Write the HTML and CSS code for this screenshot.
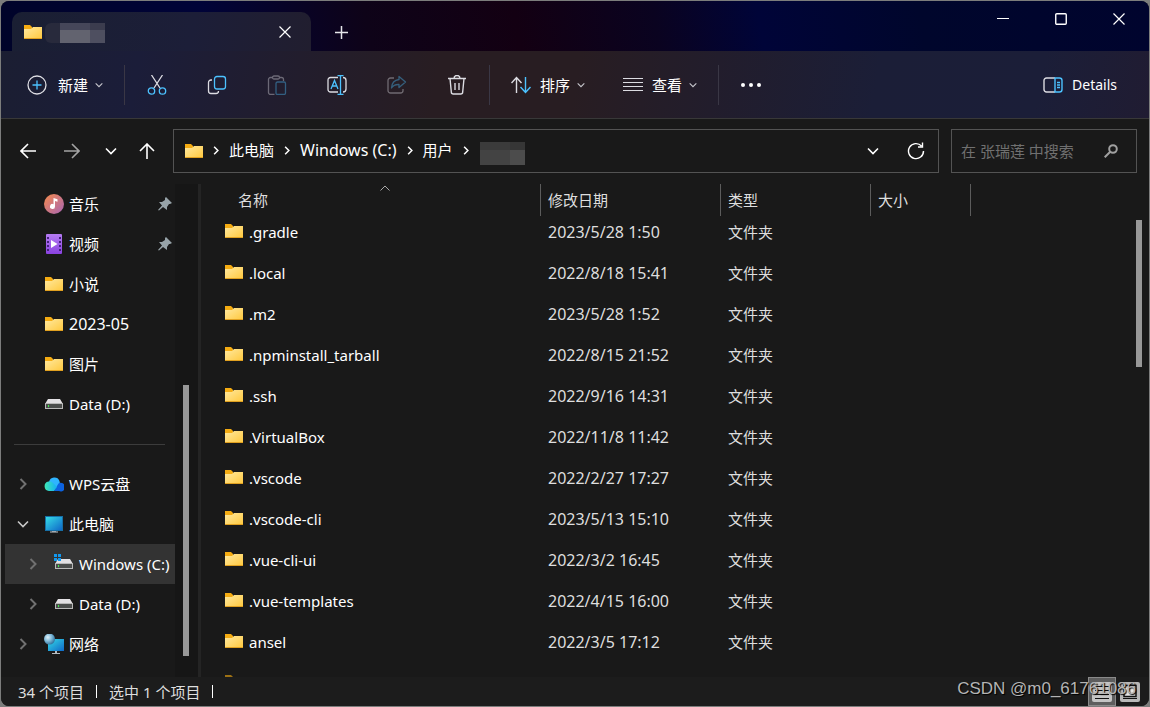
FILE: index.html
```html
<!DOCTYPE html>
<html lang="zh-CN">
  <head>
    <meta charset="UTF-8" />
    <meta name="viewport" content="width=device-width, initial-scale=1.0" />
    <title>文件资源管理器</title>
    <link rel="stylesheet" href="styles.css">
  </head>
  <body>
    <!-- shared icons -->
    <svg class="defs" aria-hidden="true">
      <defs>
        <linearGradient id="gFolder" x1="0" y1="0" x2="1" y2="1">
          <stop offset="0" stop-color="#ffe9a0" />
          <stop offset="1" stop-color="#ffc83d" />
        </linearGradient>
        <linearGradient id="gMusic" x1="0" y1="0" x2="1" y2="1">
          <stop offset="0" stop-color="#f58a4b" />
          <stop offset="1" stop-color="#a765b5" />
        </linearGradient>
        <linearGradient id="gVideo" x1="0" y1="0" x2="0" y2="1">
          <stop offset="0" stop-color="#b57cf2" />
          <stop offset="1" stop-color="#8a42e0" />
        </linearGradient>
        <linearGradient id="gScreen" x1="0" y1="0" x2="1" y2="1">
          <stop offset="0" stop-color="#35dbe6" />
          <stop offset="1" stop-color="#0f68c8" />
        </linearGradient>
        <linearGradient id="gCloud" x1="0" y1="0" x2="1" y2="0">
          <stop offset="0" stop-color="#3fe8b4" />
          <stop offset="1" stop-color="#14aef5" />
        </linearGradient>
        <radialGradient id="gGlobe" cx="0.35" cy="0.35" r="0.7">
          <stop offset="0" stop-color="#e2f2fa" />
          <stop offset="0.5" stop-color="#7fb9d8" />
          <stop offset="1" stop-color="#2f6f9a" />
        </radialGradient>
      </defs>
      <symbol id="folder" viewBox="0 0 18 14">
        <path d="M0 0h6l2 2v4H0z" fill="#f5ac12" />
        <path d="M0 4h7l2-2h9v12H0z" fill="url(#gFolder)" />
        <path d="M0 13h18v1H0z" fill="#e0a020" />
      </symbol>
      <symbol id="drive" viewBox="0 0 18 11">
        <path d="M3 0h12l3 5H0z" fill="#e3e1e4" />
        <path d="M0 4h18v6H0z" fill="#b8b8b8" />
        <path d="M1 5h16v4H1z" fill="#4b4d4c" />
        <path d="M3 6h1v2H3z" fill="#3df04a" />
      </symbol>
      <symbol id="pin" viewBox="0 0 14 14">
        <path d="M8 0l6 6-2 1-1 0-2 3v3L5 10l-4 3.500-1-.5L4 8.500 1 5h3l3-2V1z" fill="#97a3a9" />
      </symbol>
      <symbol id="right" viewBox="0 0 8 12">
        <path d="M1.500 1l5 5-5 5" fill="none" stroke="currentColor" stroke-width="2" />
      </symbol>
      <symbol id="down" viewBox="0 0 12 8">
        <path d="M1 1.500l5 5 5-5" fill="none" stroke="currentColor" stroke-width="1.600" />
      </symbol>
      <symbol id="close" viewBox="0 0 12 12">
        <path d="M.5.5l11 11M11.500.5l-11 11" stroke="currentColor" stroke-width="1.200" />
      </symbol>
    </svg>

    <div class="window">
      <header class="titlebar">
        <div class="tab">
          <svg class="folder"><use href="#folder" /></svg>
          <span class="mask tab-mask"><i></i><i></i><i></i><i></i></span>
          <button class="tab-close" aria-label="关闭标签页"><svg class="x"><use href="#close" /></svg></button>
        </div>
        <button class="tab-add" aria-label="新标签页">
          <svg width="13" height="13"><path d="M6.500 0v13M0 6.500h13" stroke="#e6e6ea" stroke-width="1.500" /></svg>
        </button>
        <div class="controls">
          <button aria-label="最小化"><svg width="12" height="12"><path d="M0 5.500h12" stroke="#fff" /></svg></button>
          <button aria-label="最大化"><svg width="12" height="12"><rect x=".75" y=".75" width="10.500" height="10.500" rx="1" fill="none" stroke="#fff" stroke-width="1.400" /></svg></button>
          <button aria-label="关闭"><svg class="x"><use href="#close" /></svg></button>
        </div>
      </header>

      <div class="toolbar">
        <button class="tool text new">
          <svg width="20" height="20" fill="none" stroke-width="1.300">
            <circle cx="10" cy="10" r="9" stroke="#dcdce2" />
            <path d="M10 5.500v9M5.500 10h9" stroke="#4cc2ff" />
          </svg>
          <span>新建</span>
          <svg class="caret"><use href="#down" /></svg>
        </button>
        <span class="sep"></span>
        <button class="tool" aria-label="剪切">
          <svg width="20" height="20" fill="none" stroke-width="1.300">
            <path d="M4.500 0L13 13M15.500 0L7 13" stroke="#dcdce2" />
            <circle cx="4.500" cy="16" r="3.200" stroke="#4cc2ff" />
            <circle cx="15.500" cy="16" r="3.200" stroke="#4cc2ff" />
          </svg>
        </button>
        <button class="tool" aria-label="复制">
          <svg width="20" height="20" fill="none" stroke-width="1.300">
            <path d="M5 5H4a2.500 2.500 0 0 0-2.500 2.500v8.500A2.500 2.500 0 0 0 4 18.500h5A2.500 2.500 0 0 0 11.500 16" stroke="#dcdce2" />
            <rect x="7.500" y="1.500" width="11" height="12.500" rx="2.500" stroke="#4cc2ff" />
          </svg>
        </button>
        <button class="tool" aria-label="粘贴" disabled>
          <svg width="20" height="20" fill="none" stroke-width="1.300">
            <path d="M7.500 19.500H3.500a2 2 0 0 1-2-2v-13a2 2 0 0 1 2-2H6M12 2.500h2.500a2 2 0 0 1 2 2V6" stroke="#dcdce2" />
            <rect x="5.500" y="1" width="7" height="3" rx="1.500" stroke="#dcdce2" />
            <rect x="9" y="7" width="9.500" height="12.500" rx="1.500" stroke="#4cc2ff" />
          </svg>
        </button>
        <button class="tool" aria-label="重命名">
          <svg width="20" height="20" fill="none" stroke-width="1.300">
            <path d="M11 2.500H3.500a2.500 2.500 0 0 0-2.500 2.500v9.500A2.500 2.500 0 0 0 3.500 17H11M16 2.500a3 3 0 0 1 3 3v8.500a3 3 0 0 1-3 3" stroke="#dcdce2" />
            <path d="M4 14L7.500 5.500 11 14M5.300 11h4.400M13.500 1v18M10.500.7h6M10.500 19.300h6" stroke="#4cc2ff" />
          </svg>
        </button>
        <button class="tool" aria-label="共享" disabled>
          <svg width="20" height="20" fill="none" stroke-width="1.300">
            <path d="M7 3H3.500a2.500 2.500 0 0 0-2.500 2.500v10A2.500 2.500 0 0 0 3.500 18h10A2.500 2.500 0 0 0 16 15.500V14" stroke="#dcdce2" />
            <path d="M12 1.500l6.500 5.500-6.500 5.500V9.500C8 9.300 6 10.500 4.500 13 4.800 8 7.500 5 12 4.500z" stroke="#4cc2ff" stroke-linejoin="round" />
          </svg>
        </button>
        <button class="tool" aria-label="删除">
          <svg width="20" height="20" fill="none" stroke="#dcdce2" stroke-width="1.400">
            <path d="M1 3.500h18M7 3.500a3 3 0 0 1 6 0M3 3.500l1.300 13.500a2 2 0 0 0 2 2h7.400a2 2 0 0 0 2-2L17 3.500M8 8v7M12 8v7" />
          </svg>
        </button>
        <span class="sep"></span>
        <button class="tool text">
          <svg width="20" height="20" fill="none" stroke-width="1.400">
            <path d="M5.500 18V3M.5 8l5-5.500 5 5.500" stroke="#dcdce2" />
            <path d="M14.500 2v15M9.500 12l5 5.500 5-5.500" stroke="#4cc2ff" />
          </svg>
          <span>排序</span>
          <svg class="caret"><use href="#down" /></svg>
        </button>
        <button class="tool text">
          <svg width="20" height="20"><path d="M0 3.500h20M0 7.500h20M0 11.500h20M0 15.500h20" stroke="#dcdce2" /></svg>
          <span>查看</span>
          <svg class="caret"><use href="#down" /></svg>
        </button>
        <span class="sep"></span>
        <button class="tool" aria-label="更多">
          <svg width="20" height="20" fill="#fff"><circle cx="2" cy="10" r="2" /><circle cx="10" cy="10" r="2" /><circle cx="18" cy="10" r="2" /></svg>
        </button>
        <button class="tool text details">
          <svg width="20" height="20" fill="none" stroke-width="1.400">
            <path d="M12 3H3.500A2.500 2.500 0 0 0 1 5.500v9A2.500 2.500 0 0 0 3.500 17H12" stroke="#dcdce2" />
            <path d="M12 3h4.500A2.500 2.500 0 0 1 19 5.500v9a2.500 2.500 0 0 1-2.500 2.500H12zM14 7.500h3M14 10h3M14 12.500h3" stroke="#4cc2ff" />
          </svg>
          <span>Details</span>
        </button>
      </div>

      <div class="navbar">
        <div class="nav">
          <button aria-label="后退"><svg width="16" height="16"><path d="M16 8H1M8 1L1 8l7 7" /></svg></button>
          <button class="dim" aria-label="前进"><svg width="16" height="16"><path d="M0 8h15M8 1l7 7-7 7" /></svg></button>
          <button class="recent" aria-label="最近浏览的位置"><svg class="down"><use href="#down" /></svg></button>
          <button class="up" aria-label="上移"><svg width="16" height="16"><path d="M8 16V1M1 8l7-7 7 7" /></svg></button>
        </div>
        <div class="address">
          <svg class="folder"><use href="#folder" /></svg>
          <svg class="crumb"><use href="#right" /></svg>
          <a href="#">此电脑</a>
          <svg class="crumb"><use href="#right" /></svg>
          <a class="latin" href="#">Windows (C:)</a>
          <svg class="crumb"><use href="#right" /></svg>
          <a href="#">用户</a>
          <svg class="crumb"><use href="#right" /></svg>
          <span class="mask path-mask"><i></i><i></i><i></i></span>
          <button class="history" aria-label="以前的位置"><svg class="down"><use href="#down" /></svg></button>
          <button class="refresh" aria-label="刷新">
            <svg width="18" height="18" fill="none" stroke="#fff" stroke-width="1.400"><path d="M16.500 9A7.500 7.500 0 1 1 14.500 4M15.500.5V5H11" /></svg>
          </button>
        </div>
        <div class="search">
          <input type="text" placeholder="在 张瑞莲 中搜索" aria-label="搜索" />
          <svg width="14" height="14" fill="none" stroke="#a0a0a0" stroke-width="2"><circle cx="9" cy="5" r="3.800" /><path d="M6.500 7.500L.7 13.300" /></svg>
        </div>
      </div>

      <main class="content">
        <nav class="sidebar">
          <ul class="tree">
            <li>
              <span class="arrow"></span>
              <svg class="ico" viewBox="0 0 20 20"><circle cx="10" cy="10" r="10" fill="url(#gMusic)" /><path d="M9.500 4l4 1.200v2.600l-2.500-.8v5.500a2.500 2.500 0 1 1-1.500-2.300z" fill="#fff" /></svg>
              <a href="#">音乐</a>
              <svg class="pin"><use href="#pin" /></svg>
            </li>
            <li>
              <span class="arrow"></span>
              <svg class="ico" viewBox="0 0 20 20"><rect x="2" width="16" height="20" rx="1" fill="url(#gVideo)" /><path d="M3 3h2v2H3zm0 4h2v2H3zm0 4h2v2H3zm0 4h2v2H3zM15 3h2v2h-2zm0 4h2v2h-2zm0 4h2v2h-2zm0 4h2v2h-2z" fill="#44217c" /><path d="M7 6l6.500 4L7 14z" fill="#fff" /></svg>
              <a href="#">视频</a>
              <svg class="pin"><use href="#pin" /></svg>
            </li>
            <li>
              <span class="arrow"></span>
              <svg class="ico"><use href="#folder" x="1" y="3" width="18" height="14" /></svg>
              <a href="#">小说</a>
            </li>
            <li>
              <span class="arrow"></span>
              <svg class="ico"><use href="#folder" x="1" y="3" width="18" height="14" /></svg>
              <a class="latin" href="#">2023-05</a>
            </li>
            <li>
              <span class="arrow"></span>
              <svg class="ico"><use href="#folder" x="1" y="3" width="18" height="14" /></svg>
              <a href="#">图片</a>
            </li>
            <li>
              <span class="arrow"></span>
              <svg class="ico"><use href="#drive" x="1" y="5" width="18" height="11" /></svg>
              <a href="#">Data (D:)</a>
            </li>
            <li class="line"></li>
            <li>
              <span class="arrow"><svg class="fold"><use href="#right" /></svg></span>
              <svg class="ico" viewBox="0 0 20 20"><path d="M5 8a5.500 5.500 0 0 1 10.500-1l1 6H7z" fill="#2fb4ff" /><path d="M10 17l4.500-7.500a4.300 4.300 0 1 1 .5 7.500z" fill="#0c62e0" /><path d="M4.500 7.500C8 7 9.500 9 13 13l-3 4H5a4.800 4.800 0 0 1-.5-9.500z" fill="url(#gCloud)" /></svg>
              <a href="#">WPS云盘</a>
            </li>
            <li>
              <span class="arrow open"><svg class="down"><use href="#down" /></svg></span>
              <svg class="ico" viewBox="0 0 20 20"><path d="M8 16h4v2H8z" fill="#8a9299" /><path d="M6 17.500h8v1H6z" fill="#c3c8cc" /><rect x="1" y="2" width="18" height="15" fill="#176fa6" /><rect x="2" y="3" width="16" height="13" fill="url(#gScreen)" /></svg>
              <a href="#">此电脑</a>
            </li>
            <li class="child selected">
              <span class="arrow"><svg class="fold"><use href="#right" /></svg></span>
              <svg class="ico"><use href="#drive" x="1" y="5" width="18" height="11" /><path d="M0 0h3v3H0zM4 0h3v3H4zM0 4h3v3H0zM4 4h3v3H4z" fill="#1298ee" /></svg>
              <a href="#">Windows (C:)</a>
            </li>
            <li class="child">
              <span class="arrow"><svg class="fold"><use href="#right" /></svg></span>
              <svg class="ico"><use href="#drive" x="1" y="5" width="18" height="11" /></svg>
              <a href="#">Data (D:)</a>
            </li>
            <li>
              <span class="arrow"><svg class="fold"><use href="#right" /></svg></span>
              <svg class="ico" viewBox="0 0 20 20"><rect x="4" y="5" width="16" height="12" fill="url(#gScreen)" /><path d="M11 17h2v2h3v1H8v-1h3z" fill="#b4bbc0" /><circle cx="5.500" cy="5" r="5.500" fill="url(#gGlobe)" /></svg>
              <a href="#">网络</a>
            </li>
          </ul>
          <div class="side-scroll"><span></span></div>
        </nav>

        <section class="files">
          <table>
            <colgroup>
              <col class="c-name" /><col class="c-date" /><col class="c-type" /><col class="c-size" /><col />
            </colgroup>
            <thead>
              <tr>
                <th class="name">名称<svg class="sort" width="10" height="6"><path d="M.5 5.500L5 1l4.500 4.500" fill="none" stroke="#a8a8a8" /></svg></th>
                <th>修改日期</th>
                <th>类型</th>
                <th>大小</th>
                <th></th>
              </tr>
            </thead>
            <tbody>
              <tr><td><svg class="folder"><use href="#folder" /></svg>.gradle</td><td>2023/5/28 1:50</td><td>文件夹</td><td></td><td></td></tr>
              <tr><td><svg class="folder"><use href="#folder" /></svg>.local</td><td>2022/8/18 15:41</td><td>文件夹</td><td></td><td></td></tr>
              <tr><td><svg class="folder"><use href="#folder" /></svg>.m2</td><td>2023/5/28 1:52</td><td>文件夹</td><td></td><td></td></tr>
              <tr><td><svg class="folder"><use href="#folder" /></svg>.npminstall_tarball</td><td>2022/8/15 21:52</td><td>文件夹</td><td></td><td></td></tr>
              <tr><td><svg class="folder"><use href="#folder" /></svg>.ssh</td><td>2022/9/16 14:31</td><td>文件夹</td><td></td><td></td></tr>
              <tr><td><svg class="folder"><use href="#folder" /></svg>.VirtualBox</td><td>2022/11/8 11:42</td><td>文件夹</td><td></td><td></td></tr>
              <tr><td><svg class="folder"><use href="#folder" /></svg>.vscode</td><td>2022/2/27 17:27</td><td>文件夹</td><td></td><td></td></tr>
              <tr><td><svg class="folder"><use href="#folder" /></svg>.vscode-cli</td><td>2023/5/13 15:10</td><td>文件夹</td><td></td><td></td></tr>
              <tr><td><svg class="folder"><use href="#folder" /></svg>.vue-cli-ui</td><td>2022/3/2 16:45</td><td>文件夹</td><td></td><td></td></tr>
              <tr><td><svg class="folder"><use href="#folder" /></svg>.vue-templates</td><td>2022/4/15 16:00</td><td>文件夹</td><td></td><td></td></tr>
              <tr><td><svg class="folder"><use href="#folder" /></svg>ansel</td><td>2022/3/5 17:12</td><td>文件夹</td><td></td><td></td></tr>
              <tr class="hidden-item"><td><svg class="folder"><use href="#folder" /></svg></td><td></td><td></td><td></td><td></td></tr>
            </tbody>
          </table>
          <div class="file-scroll"><span></span></div>
        </section>
      </main>

      <footer class="status">
        <span class="count">34 个项目</span>
        <span class="count">选中 1 个项目</span>
        <div class="views">
          <button class="active" aria-label="详细信息">
            <svg width="20" height="20"><rect width="20" height="20" rx="2" fill="#c4c4c4" /><path d="M3 4.500h14M3 8.500h14M3 12.500h14M3 16.500h14" stroke="#111" /></svg>
          </button>
          <button aria-label="大缩略图">
            <svg width="20" height="20"><rect width="20" height="20" rx="2" fill="#b8b8b8" /><rect x="4" y="3.500" width="12" height="11" fill="#e8e8e8" stroke="#111" stroke-width="1.500" /><path d="M3 16.500h14" stroke="#111" /></svg>
          </button>
        </div>
        <span class="watermark">CSDN @m0_61761086</span>
      </footer>
    </div>
  </body>
</html>
```
FILE: styles.css
```css
* {
  margin: 0;
  padding: 0;
  box-sizing: border-box;
}

body {
  height: 100vh;
  padding: 1px;
  background-color: #7c7d7c;
  font-family: "Noto Sans", "Noto Sans CJK SC", sans-serif;
  font-size: 15px;
  color: #fff;
}

ul {
  list-style: none;
}

a {
  color: inherit;
  text-decoration: none;
  white-space: nowrap;
}

button {
  display: flex;
  align-items: center;
  justify-content: center;
  border: none;
  background: none;
  font: inherit;
  color: inherit;
}

svg {
  display: block;
  flex-shrink: 0;
}

.defs {
  position: absolute;
  width: 0;
  height: 0;
}

.folder {
  width: 18px;
  height: 14px;
}

.x {
  width: 12px;
  height: 12px;
}

.down {
  width: 12px;
  height: 8px;
}

.window {
  display: flex;
  flex-direction: column;
  height: 100%;
  border-radius: 8px;
  overflow: hidden;
  background-color: #191919;
}

/* title bar */
.titlebar {
  display: flex;
  flex-shrink: 0;
  height: 50px;
  padding-left: 11px;
  background: linear-gradient(80deg, #000329 0%, #000338 18%, #0e0318 32%, #130012 45%, #0a0320 57%, #000438 66%, #00062c 80%, #00042e 100%);
}

.tab {
  display: flex;
  align-items: center;
  width: 299px;
  margin-top: 11px;
  padding-left: 12px;
  border-radius: 10px 10px 0 0;
  background: linear-gradient(100deg, #1a1f33, #1c1e38 60%, #211e2f);
}

.tab-close {
  width: 32px;
  height: 32px;
  margin-left: auto;
  margin-right: 10px;
}

.tab-add {
  width: 60px;
  padding-top: 12px;
}

.controls {
  display: flex;
  height: 36px;
  margin-left: auto;
  margin-right: 1px;
}

.controls button {
  width: 58px;
}

/* blurred out user name */
.mask {
  display: flex;
}

.mask i {
  width: 15px;
}

.tab-mask {
  height: 20px;
  margin-top: 2px;
  margin-left: 3px;
}

.tab-mask i {
  background: linear-gradient(#454659 35%, #62636f 35%);
}

.tab-mask i:first-child {
  background: #282a3c;
  border-radius: 6px 0 0 6px;
}

.tab-mask i:last-child {
  background: linear-gradient(#3b3c4e 35%, #4e4f60 35%);
}

.path-mask {
  height: 23px;
  margin-top: 5px;
  margin-left: 1px;
}

.path-mask i {
  background: linear-gradient(#3b3b3b 35%, #434343 35%);
}

.path-mask i:last-child {
  background: linear-gradient(#363636 35%, #4c4c4c 35%);
}

/* toolbar */
.toolbar {
  display: flex;
  align-items: center;
  flex-shrink: 0;
  gap: 2px;
  height: 68px;
  border-bottom: 1px solid #383838;
  background: linear-gradient(100deg, #1b1e32 0%, #1b1d39 12%, #231d2b 28%, #281d22 38%, #281d22 50%, #221d2c 62%, #1b1e37 76%, #1b1e38 90%, #201c32 100%);
}

.tool {
  width: 58px;
  height: 40px;
}

.tool.text {
  width: auto;
  padding: 0 18px;
}

.tool.text span {
  margin-left: 9px;
}

.tool.new {
  padding-left: 26px;
}

.tool.new span {
  margin-left: 11px;
}

.tool:disabled {
  opacity: 0.4;
}

.tool .caret {
  width: 8px;
  height: 6px;
  margin-left: 7px;
  color: #c8c8ce;
}

.tool.details {
  margin-left: auto;
  padding-right: 32px;
  font-size: 14px;
}

.sep {
  width: 1px;
  height: 40px;
  margin: 0 1px;
  background-color: #3a3745;
}

/* address row */
.navbar {
  display: flex;
  align-items: center;
  flex-shrink: 0;
  height: 65px;
  padding: 0 12px 2px 5px;
}

.nav {
  display: flex;
  width: 167px;
}

.nav button {
  width: 44px;
  height: 40px;
}

.nav .recent {
  width: 34px;
}

.nav .up {
  width: 38px;
}

.nav path {
  fill: none;
  stroke: #fff;
  stroke-width: 1.6;
}

.nav .dim {
  opacity: 0.6;
}

.address {
  display: flex;
  align-items: center;
  flex: 1;
  gap: 10px;
  height: 44px;
  padding-left: 11px;
  border: 1px solid #535353;
}

.address a {
  padding-bottom: 2px;
}

.address .crumb {
  width: 6px;
  height: 9px;
}

.address button {
  width: 33px;
  height: 40px;
}

.address .history {
  margin-left: auto;
}

.address .refresh {
  margin-right: 6px;
}

.search {
  display: flex;
  align-items: center;
  width: 186px;
  height: 44px;
  margin-left: 12px;
  padding: 0 18px 0 9px;
  border: 1px solid #535353;
}

.search input {
  flex: 1;
  min-width: 0;
  border: none;
  outline: none;
  background: none;
  font: inherit;
  color: #fff;
}

.search input::placeholder {
  color: #707070;
}

/* navigation pane */
.content {
  display: flex;
  flex: 1;
  min-height: 0;
}

.sidebar {
  display: flex;
  width: 200px;
  padding-left: 4px;
  border-right: 3px solid #242424;
  overflow: hidden;
}

.tree {
  width: 170px;
}

.tree li {
  display: flex;
  align-items: center;
  height: 40px;
}

.tree a {
  padding-bottom: 1px;
}

.tree .child {
  padding-left: 10px;
}

.tree .selected {
  background-color: #333;
}

.tree .line::before {
  content: "";
  width: 151px;
  height: 1px;
  margin-left: 9px;
  background-color: #3c3c3c;
}

.arrow {
  display: flex;
  justify-content: center;
  width: 35px;
  margin-right: 4px;
  color: #707070;
}

.arrow.open {
  color: #c8c8c8;
}

.fold {
  width: 8px;
  height: 12px;
}

.ico {
  width: 20px;
  height: 20px;
  margin-right: 5px;
}

.latin {
  font-size: 16px;
}

.pin {
  width: 14px;
  height: 14px;
  margin-left: auto;
  margin-right: 3px;
}

.side-scroll {
  width: 23px;
  padding: 201px 0 21px 8px;
  background-color: #161616;
}

.side-scroll span {
  display: block;
  width: 6px;
  height: 100%;
  background-color: #989898;
}

/* file list */
.files {
  display: flex;
  flex: 1;
  overflow: hidden;
}

table {
  flex: 1;
  height: max-content;
  border-collapse: collapse;
  table-layout: fixed;
}

.c-name {
  width: 340px;
}

.c-date {
  width: 180px;
}

.c-type {
  width: 150px;
}

.c-size {
  width: 100px;
}

th {
  position: relative;
  height: 32px;
  padding: 0 0 2px 7px;
  box-shadow: inset -1px 0 #5c5c5c;
  font-weight: 400;
  text-align: left;
  color: #dedede;
}

th:last-child {
  box-shadow: none;
}

th.name {
  padding-left: 37px;
}

.sort {
  position: absolute;
  top: 1px;
  left: 179px;
}

td {
  height: 41px;
  padding-left: 7px;
  line-height: 32px;
  vertical-align: top;
  white-space: nowrap;
  color: #dedede;
}

td:first-child {
  padding-left: 24px;
  color: #fff;
}

td:nth-child(2) {
  font-size: 16px;
}

td .folder {
  float: left;
  margin: 8px 6px 0 0;
}

.hidden-item {
  opacity: 0.6;
}

.file-scroll {
  width: 13px;
  padding-top: 36px;
}

.file-scroll span {
  display: block;
  width: 6px;
  height: 147px;
  background-color: #989898;
}

/* status bar */
.status {
  position: relative;
  display: flex;
  align-items: center;
  flex-shrink: 0;
  height: 29px;
  padding-left: 17px;
  background-color: #1c1c1c;
  color: #dedede;
}

.count {
  display: flex;
  align-items: center;
  padding-bottom: 1px;
}

.count::after {
  content: "";
  width: 1px;
  height: 13px;
  margin: 0 12px;
  background-color: #fff;
}

.views {
  display: flex;
  height: 100%;
  margin-left: auto;
  margin-right: 5px;
}

.views button {
  width: 28px;
}

.views .active {
  border: 1px solid #8a8a8a;
  background-color: #5e5e5e;
}

.watermark {
  position: absolute;
  top: 0;
  right: 13px;
  font-family: "Liberation Sans", sans-serif;
  font-size: 17px;
  line-height: 24px;
  color: #b4b4b4;
  text-shadow: 1px 1px 1px #000;
}
```
